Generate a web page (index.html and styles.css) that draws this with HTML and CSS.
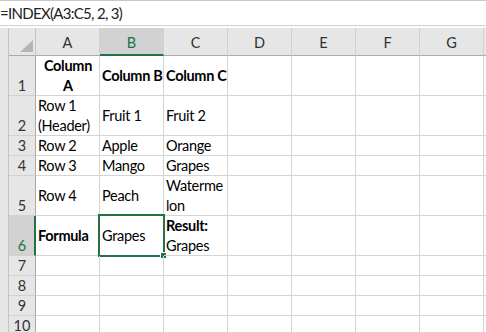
FILE: index.html
```html
<!DOCTYPE html>
<html>
<head>
<meta charset="utf-8">
<link rel="stylesheet" href="styles.css">
</head>
<body>
<div class="formula-bar">=INDEX(A3:C5, 2, 3)</div>
<div class="sheet">
  <div class="strip"></div>
  <div class="corner"><span class="tri"></span></div>
  <div class="colh">A</div>
  <div class="colh sel">B</div>
  <div class="colh">C</div>
  <div class="colh">D</div>
  <div class="colh">E</div>
  <div class="colh">F</div>
  <div class="colh">G</div>
  <div class="colh last"></div>

  <div class="rowh">1</div>
  <div class="cell bold center"><div>Column<br>A</div></div>
  <div class="cell bold"><div>Column B</div></div>
  <div class="cell bold"><div>Column C</div></div>
  <div class="cell"></div><div class="cell"></div><div class="cell"></div><div class="cell"></div><div class="cell"></div>

  <div class="rowh">2</div>
  <div class="cell"><div>Row 1<br>(Header)</div></div>
  <div class="cell"><div>Fruit 1</div></div>
  <div class="cell"><div>Fruit 2</div></div>
  <div class="cell"></div><div class="cell"></div><div class="cell"></div><div class="cell"></div><div class="cell"></div>

  <div class="rowh">3</div>
  <div class="cell"><div>Row 2</div></div>
  <div class="cell"><div>Apple</div></div>
  <div class="cell"><div>Orange</div></div>
  <div class="cell"></div><div class="cell"></div><div class="cell"></div><div class="cell"></div><div class="cell"></div>

  <div class="rowh">4</div>
  <div class="cell"><div>Row 3</div></div>
  <div class="cell"><div>Mango</div></div>
  <div class="cell"><div>Grapes</div></div>
  <div class="cell"></div><div class="cell"></div><div class="cell"></div><div class="cell"></div><div class="cell"></div>

  <div class="rowh">5</div>
  <div class="cell"><div>Row 4</div></div>
  <div class="cell"><div>Peach</div></div>
  <div class="cell"><div>Waterme<br>lon</div></div>
  <div class="cell"></div><div class="cell"></div><div class="cell"></div><div class="cell"></div><div class="cell"></div>

  <div class="rowh selrow">6</div>
  <div class="cell bold"><div>Formula</div></div>
  <div class="cell active"><div>Grapes</div><span class="selbox"><span class="handle"></span></span></div>
  <div class="cell"><div><b>Result:</b><br>Grapes</div></div>
  <div class="cell"></div><div class="cell"></div><div class="cell"></div><div class="cell"></div><div class="cell"></div>

  <div class="rowh">7</div>
  <div class="cell"></div><div class="cell"></div><div class="cell"></div><div class="cell"></div><div class="cell"></div><div class="cell"></div><div class="cell"></div><div class="cell"></div>
  <div class="rowh">8</div>
  <div class="cell"></div><div class="cell"></div><div class="cell"></div><div class="cell"></div><div class="cell"></div><div class="cell"></div><div class="cell"></div><div class="cell"></div>
  <div class="rowh">9</div>
  <div class="cell"></div><div class="cell"></div><div class="cell"></div><div class="cell"></div><div class="cell"></div><div class="cell"></div><div class="cell"></div><div class="cell"></div>
  <div class="rowh">10</div>
  <div class="cell"></div><div class="cell"></div><div class="cell"></div><div class="cell"></div><div class="cell"></div><div class="cell"></div><div class="cell"></div><div class="cell"></div>
</div>
</body>
</html>
```
FILE: styles.css
```css
* { box-sizing: border-box; }
html, body {
  margin: 0;
  padding: 0;
  width: 486px;
  height: 332px;
  overflow: hidden;
  background: #fff;
  font-family: Lato, "Open Sans", sans-serif;
  font-size: 14.5px;
  color: #000;
}
.formula-bar {
  height: 26px;
  border-top: 1px solid #c8c8c8;
  border-bottom: 1px solid #d0d0d0;
  line-height: 24px;
  padding-left: 0;
  font-size: 15px;
  letter-spacing: -0.7px;
  color: #222;
  margin-bottom: 2px;
}
.sheet {
  display: grid;
  grid-template-columns: 9px 27px repeat(7, 64px) 1fr;
  grid-template-rows: 28px 40px 40px 20px 20px 40px 40px 20px 20px 20px 20px;
}
.strip {
  grid-row: 1 / span 12;
  grid-column: 1;
  background: #e6e6e6;
  border-right: 1px solid #c4c4c4;
}
.corner {
  background: #e6e6e6;
  border-bottom: 1px solid #ababab;
  border-right: 1px solid #c4c4c4;
  position: relative;
}
.tri {
  position: absolute;
  right: 2px;
  bottom: 3px;
  width: 0;
  height: 0;
  border-left: 13px solid transparent;
  border-bottom: 12px solid #b4b4b4;
}
.colh {
  background: #e6e6e6;
  border-bottom: 1px solid #ababab;
  border-right: 1px solid #d0d0d0;
  display: flex;
  align-items: center;
  justify-content: center;
  color: #333;
  font-size: 14.5px;
  padding-top: 2px;
}
.colh.sel {
  background: #d2d2d2;
  color: #217346;
  border-bottom: 2px solid #217346;
  padding-top: 3px;
}
.colh.last { border-right: none; }
.rowh {
  background: #e6e6e6;
  border-bottom: 1px solid #d0d0d0;
  border-right: 1px solid #ababab;
  display: flex;
  align-items: flex-end;
  justify-content: center;
  color: #333;
  font-size: 14.5px;
  line-height: 19px;
}
.rowh.selrow {
  background: #d2d2d2;
  color: #217346;
  border-right: 2px solid #217346;
  padding-left: 1px;
}
.cell {
  border-right: 1px solid #d4d4d4;
  border-bottom: 1px solid #d4d4d4;
  display: flex;
  flex-direction: column;
  justify-content: center;
  padding: 0 1px 0 2px;
  line-height: 19.5px;
  letter-spacing: -0.3px;
  white-space: nowrap;
  position: relative;
}
.bold { font-weight: bold; }
.center { text-align: center; }
.selbox {
  position: absolute;
  top: -2px;
  left: -2px;
  right: -2px;
  bottom: -2px;
  border: 2px solid #217346;
}
.handle {
  position: absolute;
  right: -4px;
  bottom: -4px;
  width: 7px;
  height: 7px;
  background: #217346;
  border: 1px solid #fff;
}
```
